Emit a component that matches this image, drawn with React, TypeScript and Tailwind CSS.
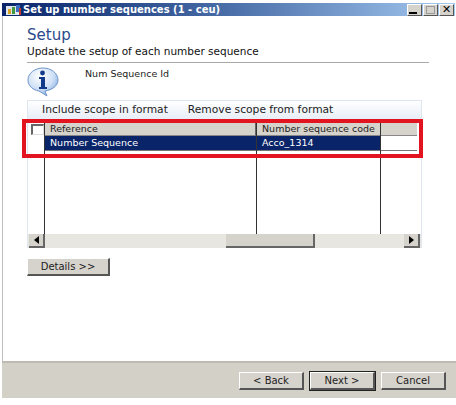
import React from "react";

function Btn({ label, w, dark }: { label: string; w: string; dark?: boolean }) {
  return (
    <div
      className={`${w} h-[18px] flex items-center justify-center text-[10px] text-[#222] bg-[#d6d3cc] border-t border-l border-t-white border-l-white border-r-2 border-b-2 border-r-[#555] border-b-[#555] ${
        dark ? "outline outline-1 outline-[#222]" : ""
      }`}
    >
      {label}
    </div>
  );
}

export default function App() {
  return (
    <div className="w-[456px] h-[405px] bg-white overflow-hidden relative font-['DejaVu_Sans',sans-serif] flex flex-col">
      <div className="h-[3px]" />
      {/* Title bar */}
      <div className="h-[13px] ml-[2px] mr-[1px] flex items-center bg-gradient-to-r from-[#0a246a] via-[#4a6ea8] to-[#a6caf0] shrink-0">
        <svg width="18" height="12" viewBox="0 0 18 12" className="ml-[3px] shrink-0">
          <rect x="1" y="2" width="13" height="9" fill="#dfe6f0" />
          <rect x="3" y="5" width="3" height="5" fill="#d9a520" />
          <rect x="7" y="3" width="3" height="7" fill="#3f9a3f" />
          <rect x="11" y="1" width="4" height="7" fill="#3c6fc4" />
          <rect x="14" y="4" width="2" height="7" fill="#c23a2a" />
        </svg>
        <span className="ml-[0px] text-[10px] font-bold text-white whitespace-nowrap leading-none">
          Set up number sequences (1 - ceu)
        </span>
        <div className="ml-auto flex gap-[1px] mr-[1px]">
          {[
            <div key="a" className="w-[8px] h-[2px] bg-black mt-[7px] ml-[1px]" />,
            <div key="b" className="w-[9px] h-[8px] border border-[#9a9a9a] mt-[1px] mx-auto" />,
            <span key="c" className="block text-[11px] font-bold leading-[10px] text-black text-center">✕</span>,
          ].map((icon, i) => (
            <div
              key={i}
              className="w-[15px] h-[12px] bg-[#d6d3cc] border-t border-l border-t-white border-l-white border-r border-b border-r-[#555] border-b-[#555]"
            >
              {icon}
            </div>
          ))}
        </div>
      </div>

      {/* Body */}
      <div className="flex-1 ml-[2px] border-l border-l-[#bdbdbd] pl-[24px] pr-[33px] flex flex-col min-h-0">
        <div className="mt-[10px] text-[15px] leading-[18px] text-[#2b4a8b]">Setup</div>
        <div className="mt-[1px] text-[10.5px] leading-[13px] text-[#111]">
          Update the setup of each number sequence
        </div>
        <div className="mt-[4px] h-[1px] w-[402px] bg-[#a8a8a8]" />
        <div className="mt-[4px] flex h-[30px]">
          <svg width="32" height="30" viewBox="0 0 32 30" className="shrink-0">
            <defs>
              <radialGradient id="bub" cx="40%" cy="30%" r="75%">
                <stop offset="0%" stopColor="#ffffff" />
                <stop offset="60%" stopColor="#cfe0f6" />
                <stop offset="100%" stopColor="#7ea6dc" />
              </radialGradient>
            </defs>
            <path d="M16 1C8 1 1 6 1 13c0 6 5 10 11 11l8 5-2-5c7-1 13-5 13-11C31 6 24 1 16 1z" fill="url(#bub)" stroke="#6f96cc" strokeWidth="1" />
            <circle cx="15.5" cy="6" r="2.4" fill="#123a8a" />
            <path d="M12 10h6v10h2v2h-8v-2h2v-8h-2z" fill="#123a8a" />
          </svg>
          <div className="ml-[26px] mt-[1px] text-[9.5px] leading-[12px] text-[#222]">Num Sequence Id</div>
        </div>

        {/* Grid */}
        <div className="mt-[3px] w-[395px] h-[148px] border border-[#dfe6ef] border-b-0 flex flex-col shrink-0">
          <div className="h-[19px] shrink-0 bg-gradient-to-b from-white to-[#e6edf7] flex items-center pl-[14px] text-[10.7px] text-[#222] gap-[20px]">
            <span>Include scope in format</span>
            <span>Remove scope from format</span>
          </div>
          <div className="flex-1 flex bg-white mt-[2px] min-h-0">
            <div className="w-[16px] shrink-0 relative">
              <div className="w-[13px] h-[11px] ml-[3px] mt-[2px] border-t-2 border-l-2 border-t-[#666] border-l-[#666] border-r border-b border-r-[#ddd] border-b-[#ddd]" />
            </div>
            <div className="w-[212px] shrink-0 border-l border-l-[#333] flex flex-col">
              <div className="h-[14px] bg-[#d6d3cc] border-b border-b-[#888] border-r border-r-[#666] pl-[5px] text-[9.5px] leading-[13px] text-[#222]">Reference</div>
              <div className="h-[15px] bg-[#0a246a] border-b border-b-[#777] pl-[5px] text-[9.5px] leading-[14px] text-white">Number Sequence</div>
            </div>
            <div className="w-[124px] shrink-0 border-l border-l-[#333] flex flex-col">
              <div className="h-[14px] bg-[#d6d3cc] border-b border-b-[#888] pl-[5px] text-[9.5px] leading-[13px] text-[#222] whitespace-nowrap">Number sequence code</div>
              <div className="h-[15px] bg-[#0a246a] border-b border-b-[#777] pl-[5px] text-[9.5px] leading-[14px] text-white">Acco_1314</div>
            </div>
            <div className="flex-1 border-l border-l-[#333] flex flex-col">
              <div className="h-[14px] bg-[#d6d3cc] border-b border-b-[#888] mr-[4px]" />
              <div className="h-[15px] border-b border-b-[#777] mr-[4px]" />
            </div>
          </div>
          {/* Scrollbar */}
          <div className="h-[14px] shrink-0 flex items-stretch bg-[#e8e6e0] pl-[1px] pr-[1px]">
            <div className="w-[16px] bg-[#d6d3cc] border-r-2 border-b-2 border-r-[#666] border-b-[#666] flex items-center justify-center">
              <div className="w-0 h-0 border-y-[4px] border-y-transparent border-r-[5px] border-r-black" />
            </div>
            <div className="w-[181px]" />
            <div className="w-[89px] bg-[#d6d3cc] border-r-2 border-b-2 border-r-[#666] border-b-[#666]" />
            <div className="flex-1" />
            <div className="w-[16px] bg-[#d6d3cc] border-r-2 border-b-2 border-r-[#666] border-b-[#666] flex items-center justify-center">
              <div className="w-0 h-0 border-y-[4px] border-y-transparent border-l-[5px] border-l-black" />
            </div>
          </div>
        </div>

        <div className="mt-[10px]">
          <Btn label="Details >>" w="w-[83px]" />
        </div>
      </div>

      {/* Footer */}
      <div className="h-[37px] shrink-0 ml-[2px] mb-[7px] bg-[#d3d0c8] border-t-2 border-t-[#bdbab4] flex items-center justify-end gap-[6px] pr-[10px]">
        <Btn label="< Back" w="w-[65px]" />
        <Btn label="Next >" w="w-[65px]" dark />
        <Btn label="Cancel" w="w-[65px]" />
      </div>

      {/* Red annotation rectangle */}
      <div className="absolute left-[22px] top-[119px] w-[401px] h-[39px] border-[4px] border-[#e2141f]" />
    </div>
  );
}
